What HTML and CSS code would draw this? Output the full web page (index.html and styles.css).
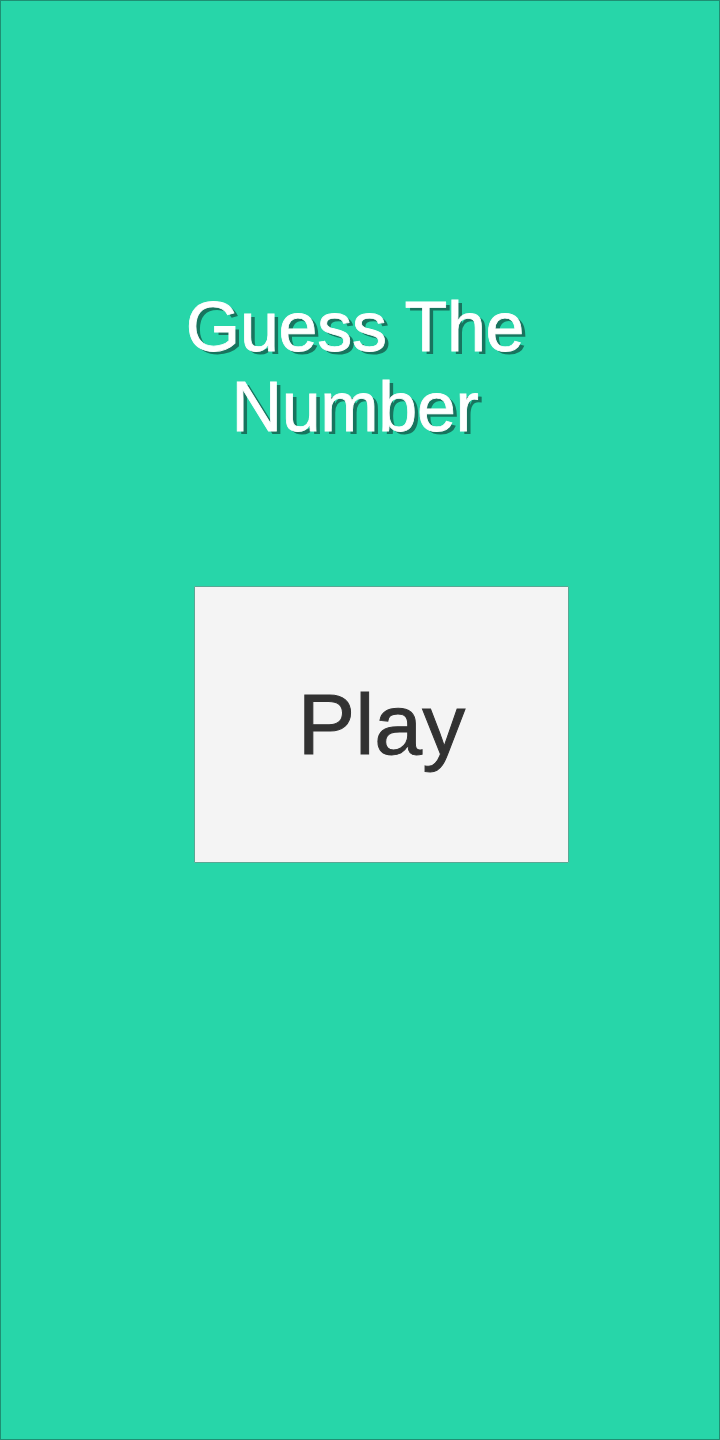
FILE: index.html
```html
<!DOCTYPE html>
<html lang="en">
<head>
<meta charset="utf-8">
<title>Guess The Number</title>
<link rel="stylesheet" href="styles.css">
</head>
<body>
<main class="screen">
  <h1 class="title">Guess The<br>Number</h1>
  <button class="play-btn" type="button">Play</button>
</main>
</body>
</html>
```
FILE: styles.css
```css
html, body {
  margin: 0;
  padding: 0;
}

body {
  background: #27d6a9;
  font-family: "Liberation Sans", Arial, sans-serif;
}

.screen {
  box-sizing: border-box;
  width: 720px;
  height: 1440px;
  border: 1px solid #1f8f73;
  background: #27d6a9;
  display: flex;
  flex-direction: column;
  align-items: center;
  padding-top: 286px;
}

.title {
  margin: 0 10px 0 0;
  font-size: 70px;
  font-weight: normal;
  line-height: 80px;
  text-align: center;
  color: #ffffff;
  -webkit-text-stroke: 0.8px #ffffff;
  text-shadow: 4px 3px 0 #18745e;
  letter-spacing: -0.3px;
}

.play-btn {
  margin: 139px 0 0 43px;
  width: 375px;
  height: 277px;
  box-sizing: border-box;
  background: #f4f4f4;
  border: 1px solid #5aa794;
  border-radius: 1px;
  font-family: "Liberation Sans", Arial, sans-serif;
  font-size: 86px;
  color: #323232;
  -webkit-text-stroke: 1px #323232;
  padding: 0;
  cursor: pointer;
}
```
